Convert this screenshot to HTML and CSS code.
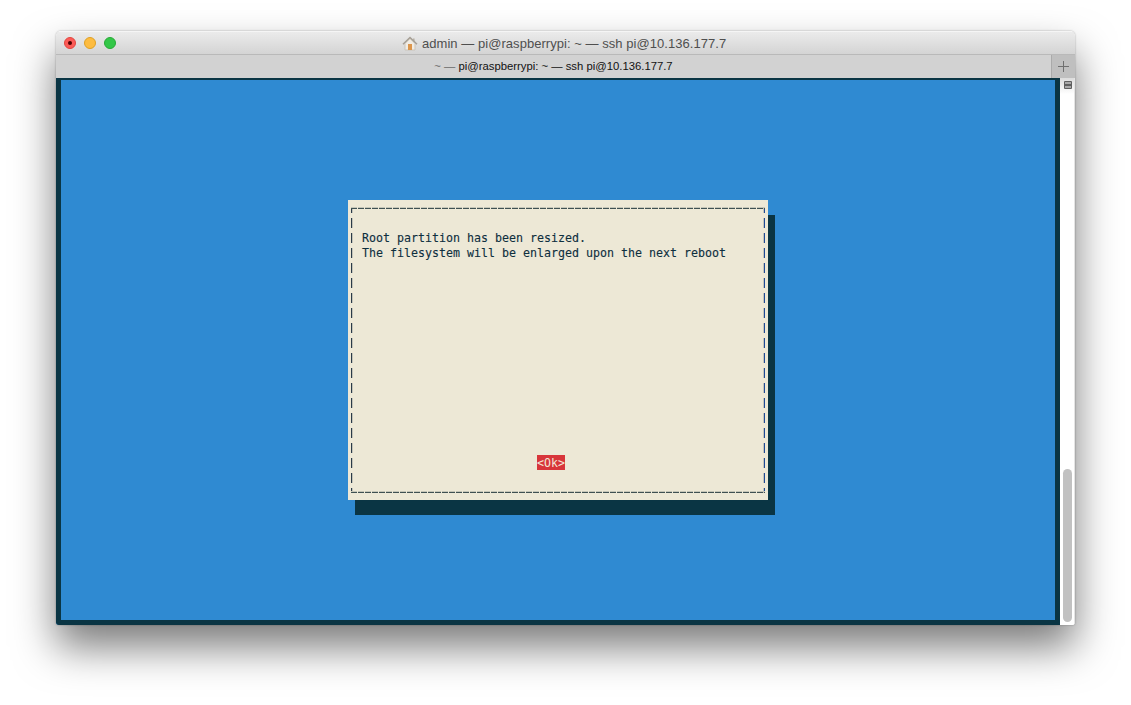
FILE: index.html
```html
<!DOCTYPE html>
<html lang="en">
<head>
<meta charset="utf-8">
<title>Terminal</title>
<link rel="stylesheet" href="styles.css">
</head>
<body>
<div class="window">
  <header class="titlebar">
    <div class="lights">
      <span class="light red"><span class="dot"></span></span>
      <span class="light yellow"></span>
      <span class="light green"></span>
    </div>
    <div class="title">
      <svg class="home" width="16" height="15" viewBox="0 0 16 15">
        <path d="M11 2.5H12.6V6H11Z" fill="#b9b2a8"/>
        <path d="M3 7.5V14H13V7.5L8 2.5Z" fill="#f1ece4" stroke="#c9c3b9" stroke-width="1"/>
        <path d="M1 8.3L8 1.5L15 8.3" fill="none" stroke="#a69f95" stroke-width="1.5"/>
        <rect x="6" y="8" width="4" height="6" fill="#dc964c"/>
      </svg>
      <span class="title-text">admin — pi@raspberrypi: ~ — ssh pi@10.136.177.7</span>
    </div>
  </header>
  <div class="tabbar">
    <div class="tab"><span class="dim">~ — </span>pi@raspberrypi: ~ — ssh pi@10.136.177.7</div>
    <div class="newtab">
      <svg width="11" height="11" viewBox="0 0 11 11"><path d="M5.5 0V11M0 5.5H11" stroke="#6f6f6f" stroke-width="1"/></svg>
    </div>
  </div>
  <div class="body">
    <main class="screen">
      <section class="dialog">
        <div class="frame">
          <p class="message">Root partition has been resized.
The filesystem will be enlarged upon the next reboot</p>
          <span class="ok">&lt;Ok&gt;</span>
        </div>
      </section>
    </main>
    <aside class="scroller">
      <div class="split"><span></span><span></span></div>
      <div class="thumb"></div>
    </aside>
  </div>
</div>
</body>
</html>
```
FILE: styles.css
```css
* { box-sizing: border-box; }
html, body { margin: 0; height: 100%; background: #fff; overflow: hidden; }
body { padding: 31px 0 0 56px; }

.window {
  width: 1019px;
  height: 594px;
  display: flex;
  flex-direction: column;
  border-radius: 5px 5px 3px 3px;
  box-shadow: 0 0 2px rgba(0,0,0,.35), 0 22px 42px rgba(0,0,0,.52);
  overflow: hidden;
  font-family: "Liberation Sans", Arial, sans-serif;
}

.titlebar {
  height: 24px;
  flex: none;
  display: flex;
  align-items: center;
  position: relative;
  background: linear-gradient(#ececec, #d4d4d4);
  border-bottom: 1px solid #b9b9b9;
  box-shadow: inset 0 1px 0 #f5f5f5;
}
.lights { display: flex; gap: 8px; padding-left: 8px; }
.light {
  width: 12px; height: 12px; border-radius: 50%;
  display: flex; align-items: center; justify-content: center;
}
.red { background: #fc5b57; border: 1px solid #e2463f; }
.yellow { background: #fdbc40; border: 1px solid #dfa023; }
.green { background: #33c748; border: 1px solid #27aa35; }
.dot { width: 4px; height: 4px; border-radius: 50%; background: #4d0000; }
.title {
  position: absolute; left: 346px; top: 3px;
  display: flex; align-items: flex-start; gap: 4px;
  font-size: 13px; line-height: 18px; color: #4f4f4f; white-space: nowrap;
}
.title-text { padding-top: 1px; letter-spacing: .045px; }
.home { flex: none; margin-top: 2px; }

.tabbar {
  height: 23px;
  flex: none;
  display: flex;
  background: #d2d2d2;
}
.tab {
  flex: 1;
  text-align: center;
  font-size: 11.3px;
  line-height: 22px;
  color: #111;
  white-space: nowrap;
}
.dim { color: #6a6a6a; }
.newtab {
  width: 24px;
  display: flex; align-items: center; justify-content: center;
  background: #bfbfbf;
  border-left: 1px solid #aaa;
}

.body { flex: 1; display: flex; min-height: 0; }
.screen {
  width: 1004px;
  background: #2f8ad2;
  border: solid #0a3544;
  border-width: 2px 5px 5px 5px;
  padding: 120px 0 0 287px;
}
.dialog {
  width: 420px;
  height: 300px;
  padding: 7px 3px;
  background: #ede8d6;
  box-shadow: 7px 15px 0 #0a3544;
}
.frame {
  height: 100%;
  display: flex;
  flex-direction: column;
  align-items: flex-start;
  padding: 23px 0 23px 11px;
  background-image:
    linear-gradient(90deg, #3f5052 6px, transparent 6px),
    linear-gradient(90deg, #c6c6b8 6px, transparent 6px),
    linear-gradient(90deg, #3f5052 6px, transparent 6px),
    linear-gradient(90deg, #c6c6b8 6px, transparent 6px),
    linear-gradient(#2a3a48 10px, transparent 10px),
    linear-gradient(#c3c3b8 10px, transparent 10px),
    linear-gradient(#1d4a96 10px, transparent 10px),
    linear-gradient(#c3c3b8 10px, transparent 10px);
  background-size: 7px 1px, 7px 1px, 7px 1px, 7px 1px, 1px 15px, 1px 15px, 1px 15px, 1px 15px;
  background-repeat: repeat-x, repeat-x, repeat-x, repeat-x, repeat-y, repeat-y, repeat-y, repeat-y;
  background-position: 0 1px, 0 0, 0 100%, 0 calc(100% - 1px), 0 11px, 1px 11px, 100% 11px, calc(100% - 1px) 11px;
}
.message {
  margin: 0;
  padding-top: 1px;
  white-space: pre;
  font: 11.63px/15px "DejaVu Sans Mono", monospace;
  color: #0e2f3e;
  -webkit-text-stroke: .12px #0e2f3e;
}
.ok {
  margin-top: auto;
  margin-left: 175px;
  width: 28px;
  height: 15px;
  padding-top: 1px;
  background: #d8353a;
  color: #f2e6d8;
  font: 11.63px/15px "DejaVu Sans Mono", monospace;
}

.scroller {
  flex: 1;
  background: linear-gradient(#dcdcdc, #fff 16px);
  display: flex;
  flex-direction: column;
  align-items: center;
  padding: 3px 0 3px;
  border-right: 1px solid #e4e4e4;
}
.split {
  width: 8px; height: 8px;
  background: #5f5f5f;
  border-radius: 1px;
  padding: 1px;
  display: flex; flex-direction: column; justify-content: space-between;
  align-self: flex-start;
  margin-left: 4px;
}
.split span { height: 2px; background: #a8a8a8; }
.thumb {
  margin-top: auto;
  width: 9px;
  height: 153px;
  border-radius: 5px;
  background: #c1c1c1;
}
```
